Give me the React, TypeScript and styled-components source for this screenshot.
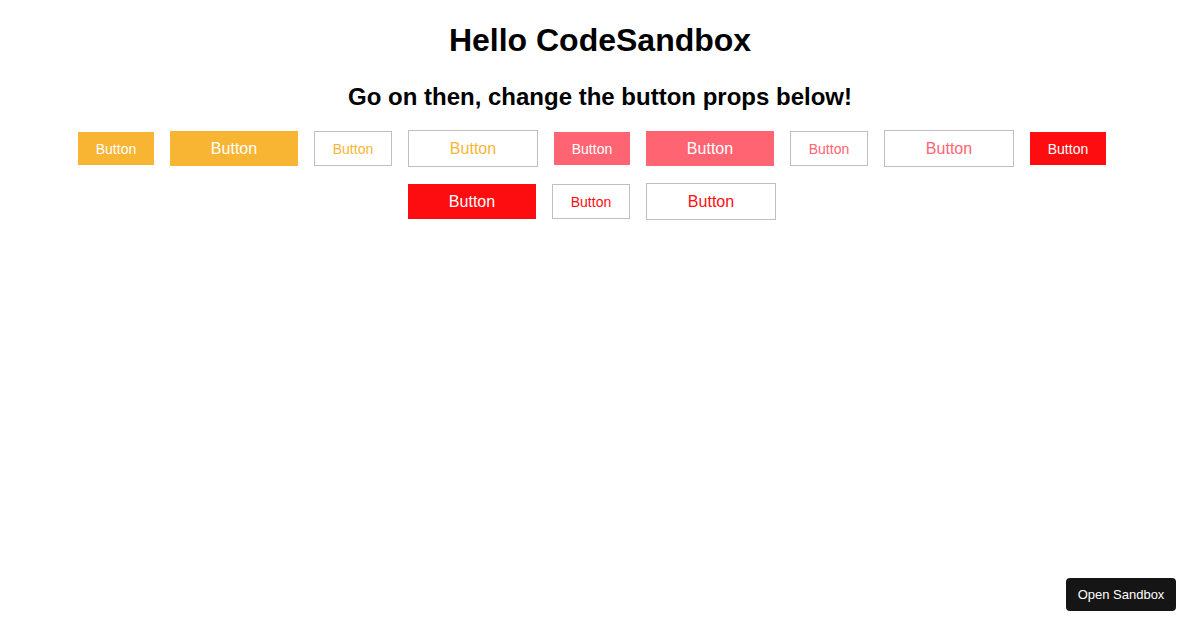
import React from "react";
import styled, { createGlobalStyle } from "styled-components";

const GlobalStyle = createGlobalStyle`
  body {
    margin: 0 8px;
    background: #ffffff;
    font-family: "Liberation Sans", Arial, sans-serif;
  }
`;

const AppWrap = styled.div`
  text-align: center;
  font-family: "Liberation Sans", Arial, sans-serif;
  padding-top: 1px;
`;

const Title = styled.h1`
  font-size: 32px;
  margin: 21px 0;
`;

const Subtitle = styled.h2`
  font-size: 24px;
  margin: 24px 0 19px;
`;

const ButtonRow = styled.div`
  display: flex;
  flex-wrap: wrap;
  justify-content: center;
  align-items: baseline;
`;

const palette = {
  yellow: "#f8b534",
  pink: "#ff6472",
  red: "#fe0d10",
};

type Kind = keyof typeof palette;

const Btn = styled.button<{ $kind: Kind; $large?: boolean; $outline?: boolean }>`
  display: inline-flex;
  align-items: center;
  justify-content: center;
  box-sizing: content-box;
  width: ${(p) => (p.$large ? 128 : 76)}px;
  height: ${(p) => (p.$large ? 35 : 33)}px;
  padding: 0;
  margin: 0 16px 16px 0;
  font-family: "Liberation Sans", Arial, sans-serif;
  font-size: ${(p) => (p.$large ? 16 : 14)}px;
  cursor: pointer;
  border: ${(p) => (p.$outline ? "1px solid #bfbfbf" : "none")};
  background: ${(p) => (p.$outline ? "#ffffff" : palette[p.$kind])};
  color: ${(p) => (p.$outline ? palette[p.$kind] : "#ffffff")};
`;

const OpenSandbox = styled.a`
  position: fixed;
  right: 24px;
  bottom: 19px;
  width: 110px;
  height: 33px;
  display: flex;
  align-items: center;
  justify-content: center;
  background: #151515;
  color: #ffffff;
  border-radius: 4px;
  font-family: "Liberation Sans", Arial, sans-serif;
  font-size: 13px;
  text-decoration: none;
`;

const kinds: Kind[] = ["yellow", "pink", "red"];

export default function App() {
  return (
    <AppWrap>
      <GlobalStyle />
      <Title>Hello CodeSandbox</Title>
      <Subtitle>Go on then, change the button props below!</Subtitle>
      <ButtonRow>
        {kinds.map((k) => (
          <React.Fragment key={k}>
            <Btn $kind={k}>Button</Btn>
            <Btn $kind={k} $large>
              Button
            </Btn>
            <Btn $kind={k} $outline>
              Button
            </Btn>
            <Btn $kind={k} $large $outline>
              Button
            </Btn>
          </React.Fragment>
        ))}
      </ButtonRow>
      <OpenSandbox href="#">Open Sandbox</OpenSandbox>
    </AppWrap>
  );
}
